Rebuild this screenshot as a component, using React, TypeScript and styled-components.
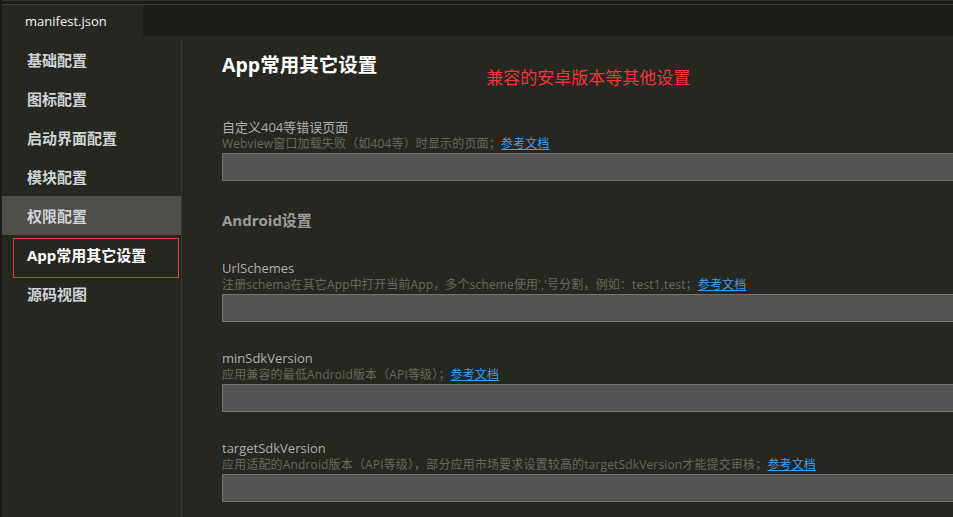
import React from 'react'
import styled, {createGlobalStyle} from 'styled-components'

const GlobalStyle = createGlobalStyle`
  html, body {
    margin: 0;
    padding: 0;
    background: #272722;
  }
  body {
    font-family: "Open Sans", "Noto Sans CJK SC", sans-serif;
  }
`

type INavItemProps = {
    active?: boolean,
    selected?: boolean
}

type IField = {
    label: string,
    desc: string
}

const StyledApp = styled.div`
  width: 953px;
  height: 517px;
  display: flex;
  flex-direction: column;
  overflow: hidden;
  background-color: #272722;
  border-left: 2px solid #1b1b18;
  box-sizing: border-box;
`

const TopStrip = styled.div`
  height: 3px;
  flex-shrink: 0;
  background-color: #1c1c19;
  border-top: 1px solid #30302c;
  border-bottom: 1px solid #3a3a36;
`

const TabBar = styled.div`
  height: 31px;
  flex-shrink: 0;
  display: flex;
  background-color: #1d1e1a;
`

const Tab = styled.div`
  width: 141px;
  display: flex;
  align-items: center;
  padding-left: 23px;
  box-sizing: border-box;
  background-color: #272722;
  color: #f2f2f2;
  font-size: 13px;
`

const Body = styled.div`
  flex: 1;
  display: flex;
  min-height: 0;
`

const SideNav = styled.div`
  width: 179px;
  flex-shrink: 0;
  display: flex;
  flex-direction: column;
  margin-top: 4px;
  background-color: #272722;
  border-right: 1px solid #3a3a35;
`

const NavItem = styled.div<INavItemProps>`
  position: relative;
  height: 39px;
  flex-shrink: 0;
  display: flex;
  align-items: center;
  padding-left: 25px;
  font-size: 15px;
  font-weight: bold;
  color: ${({selected}) => selected ? '#ffffff' : '#cfd3d6'};
  background-color: ${({active}) => active ? '#4f4f4a' : 'transparent'};

  &::after {
    content: '';
    display: ${({selected}) => selected ? 'block' : 'none'};
    position: absolute;
    top: 3px;
    bottom: -4px;
    left: 11px;
    right: 2px;
    border: 1px solid #d9413b;
  }
`

const Main = styled.div`
  flex: 1;
  min-width: 0;
  padding: 15px 0 0 40px;
  display: flex;
  flex-direction: column;
  overflow: hidden;

  & > * {
    flex-shrink: 0;
  }
`

const Header = styled.div`
  display: flex;
  align-items: flex-start;
  height: 68px;
`

const Title = styled.div`
  font-size: 19.5px;
  font-weight: bold;
  color: #ffffff;
  line-height: 28px;
`

const Note = styled.div`
  margin: 16px 0 0 109px;
  font-size: 17px;
  color: #f2343a;
  line-height: 22px;
`

const Field = styled.div`
  display: flex;
  flex-direction: column;
  margin-bottom: 28px;
`

const Label = styled.div`
  font-size: 13px;
  line-height: 17px;
  color: #aeaeae;
`

const Desc = styled.div`
  font-size: 12px;
  line-height: 16px;
  letter-spacing: 0.15px;
  color: #67675f;
  margin-bottom: 1px;
  white-space: nowrap;
`

const DocLink = styled.a`
  color: #3d9ff0;
  text-decoration: underline;
  cursor: pointer;
`

const Input = styled.div`
  height: 28px;
  margin-right: -20px;
  background-color: #555555;
  border: 1px solid #727272;
  box-sizing: border-box;
`

const SectionTitle = styled.div`
  font-size: 15px;
  font-weight: bold;
  color: #9c9c9c;
  line-height: 20px;
  margin: 1px 0 30px;
`

const navItems = ['基础配置', '图标配置', '启动界面配置', '模块配置', '权限配置', 'App常用其它设置', '源码视图']

const androidFields: IField[] = [
    {label: 'UrlSchemes', desc: "注册schema在其它App中打开当前App，多个scheme使用','号分割，例如：test1,test；"},
    {label: 'minSdkVersion', desc: '应用兼容的最低Android版本（API等级）；'},
    {label: 'targetSdkVersion', desc: '应用适配的Android版本（API等级），部分应用市场要求设置较高的targetSdkVersion才能提交审核；'},
]

const SettingField = (props: IField) => {
    return (
        <Field>
            <Label>{props.label}</Label>
            <Desc>{props.desc}<DocLink>参考文档</DocLink></Desc>
            <Input/>
        </Field>
    )
}

const App = () => {
    return (
        <React.Fragment>
            <GlobalStyle/>
            <StyledApp>
                <TopStrip/>
                <TabBar>
                    <Tab>manifest.json</Tab>
                </TabBar>
                <Body>
                    <SideNav>
                        {navItems.map((item, i) => (
                            <NavItem key={item} active={i === 4} selected={i === 5}>{item}</NavItem>
                        ))}
                    </SideNav>
                    <Main>
                        <Header>
                            <Title>App常用其它设置</Title>
                            <Note>兼容的安卓版本等其他设置</Note>
                        </Header>
                        <SettingField label='自定义404等错误页面' desc='Webview窗口加载失败（如404等）时显示的页面；'/>
                        <SectionTitle>Android设置</SectionTitle>
                        {androidFields.map(f => <SettingField key={f.label} label={f.label} desc={f.desc}/>)}
                    </Main>
                </Body>
            </StyledApp>
        </React.Fragment>
    )
}

export default App
